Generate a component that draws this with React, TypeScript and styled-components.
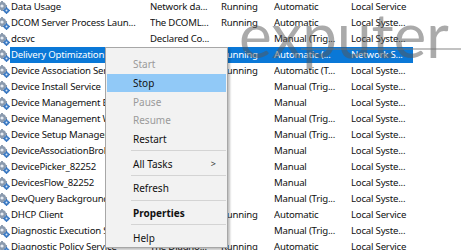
import styled, { createGlobalStyle } from "styled-components";

type Service = {
  name: string;
  desc?: string;
  status?: string;
  startup: string;
  logon: string;
  selected?: boolean;
};

const services: Service[] = [
  { name: "Data Usage", desc: "Network da...", status: "Running", startup: "Automatic", logon: "Local Service" },
  { name: "DCOM Server Process Laun...", desc: "The DCOML...", status: "Running", startup: "Automatic", logon: "Local Syste..." },
  { name: "dcsvc", desc: "Declared Co...", startup: "Manual (Trig...", logon: "Local Syste..." },
  { name: "Delivery Optimization", desc: "Performs...", status: "Running", startup: "Automatic (...", logon: "Network S...", selected: true },
  { name: "Device Association Service", desc: "Enables pa...", status: "Running", startup: "Automatic (T...", logon: "Local Syste..." },
  { name: "Device Install Service", desc: "Enables a c...", startup: "Manual (Trig...", logon: "Local Syste..." },
  { name: "Device Management Enrollment", desc: "Performs D...", startup: "Manual", logon: "Local Syste..." },
  { name: "Device Management Wireless", desc: "Routes Wir...", startup: "Manual (Trig...", logon: "Local Syste..." },
  { name: "Device Setup Manager", desc: "Enables the...", startup: "Manual (Trig...", logon: "Local Syste..." },
  { name: "DeviceAssociationBroker_82252", desc: "Enables app...", startup: "Manual", logon: "Local Syste..." },
  { name: "DevicePicker_82252", desc: "This user se...", startup: "Manual", logon: "Local Syste..." },
  { name: "DevicesFlow_82252", desc: "Allows Con...", startup: "Manual", logon: "Local Syste..." },
  { name: "DevQuery Background Discovery", desc: "Enables app...", startup: "Manual (Trig...", logon: "Local Syste..." },
  { name: "DHCP Client", desc: "Registers an...", status: "Running", startup: "Automatic", logon: "Local Service" },
  { name: "Diagnostic Execution Service", desc: "Executes di...", startup: "Manual (Trig...", logon: "Local Syste..." },
  { name: "Diagnostic Policy Service", desc: "The Diagno...", status: "Running", startup: "Automatic", logon: "Local Service" },
];

type MenuEntry =
  | { kind: "item"; label: string; disabled?: boolean; active?: boolean; bold?: boolean; sub?: boolean }
  | { kind: "sep" };

const menu: MenuEntry[] = [
  { kind: "item", label: "Start", disabled: true },
  { kind: "item", label: "Stop", active: true },
  { kind: "item", label: "Pause", disabled: true },
  { kind: "item", label: "Resume", disabled: true },
  { kind: "item", label: "Restart" },
  { kind: "sep" },
  { kind: "item", label: "All Tasks", sub: true },
  { kind: "sep" },
  { kind: "item", label: "Refresh" },
  { kind: "sep" },
  { kind: "item", label: "Properties", bold: true },
  { kind: "sep" },
  { kind: "item", label: "Help" },
];

function GearIcon() {
  return (
    <svg width="10" height="13" viewBox="0 0 10 13">
      {/* big gear, cropped at the left edge */}
      <g fill="#8a9aae">
        <circle cx="2" cy="5" r="4" />
        <rect x="1" y="0" width="2" height="10" />
        <rect x="-3" y="4" width="10" height="2" />
      </g>
      <circle cx="2" cy="5" r="1.6" fill="#e6ecf3" />
      {/* small blue gear */}
      <g fill="#3a78c2">
        <circle cx="6.5" cy="9.5" r="2.6" />
        <rect x="5.8" y="6" width="1.4" height="7" />
        <rect x="3" y="8.8" width="7" height="1.4" />
      </g>
      <circle cx="6.5" cy="9.5" r="1" fill="#dbe7f5" />
    </svg>
  );
}

export default function App() {
  return (
    <>
      <GlobalStyle />
      <Page>
        <List>
          {services.map((s, i) => (
            <Row key={i}>
              <IconCell>
                <GearIcon />
              </IconCell>
              <Cells $selected={s.selected}>
                <Cell>{s.name}</Cell>
                <Cell>{s.desc}</Cell>
                <Cell>{s.status}</Cell>
                <Cell>{s.startup}</Cell>
                <Cell>{s.logon}</Cell>
              </Cells>
            </Row>
          ))}
        </List>

        {/* site watermark */}
        <Watermark>
          exputer
          <WatermarkLine />
        </Watermark>

        {/* right-click menu */}
        <ContextMenu>
          {menu.map((m, i) =>
            m.kind === "sep" ? (
              <Separator key={i} />
            ) : (
              <MenuItem key={i} $disabled={m.disabled} $active={m.active} $bold={m.bold}>
                <span>{m.label}</span>
                {m.sub && <Chevron>&gt;</Chevron>}
              </MenuItem>
            )
          )}
        </ContextMenu>
      </Page>
    </>
  );
}

const GlobalStyle = createGlobalStyle`
  html, body {
    margin: 0;
    padding: 0;
    background: #ffffff;
    overflow: hidden;
  }
  body {
    font-family: "Noto Sans", "Open Sans", sans-serif;
  }
`;

const Page = styled.div`
  position: relative;
  width: 474px;
  height: 250px;
  overflow: hidden;
  background: #ffffff;
`;

const List = styled.div`
  display: flex;
  flex-direction: column;
  margin-top: -1px;
`;

const Row = styled.div`
  display: flex;
  height: 16px;
  align-items: center;
`;

const IconCell = styled.div`
  width: 10px;
  height: 16px;
  display: flex;
  align-items: center;
  flex-shrink: 0;
`;

const Cells = styled.div<{ $selected?: boolean }>`
  display: grid;
  grid-template-columns: 139px 71px 53px 77px 62px;
  width: 403px;
  height: 16px;
  padding-left: 1px;
  box-sizing: border-box;
  align-items: center;
  background: ${(p) => (p.$selected ? "#0a78d7" : "transparent")};
  color: ${(p) => (p.$selected ? "#ffffff" : "#111111")};
`;

const Cell = styled.div`
  font-size: 9.6px;
  letter-spacing: -0.2px;
  line-height: 16px;
  white-space: nowrap;
  overflow: hidden;
`;

const Watermark = styled.div`
  position: absolute;
  left: 239px;
  top: 3px;
  font-family: "Lato", "DejaVu Sans", sans-serif;
  font-weight: 400;
  font-size: 62px;
  letter-spacing: 0;
  line-height: 1;
  color: rgba(85, 85, 85, 0.5);
  pointer-events: none;
`;

const WatermarkLine = styled.div`
  position: absolute;
  left: 62px;
  top: 45px;
  width: 160px;
  height: 2px;
  background: rgba(120, 120, 120, 0.45);
`;

const ContextMenu = styled.div`
  position: absolute;
  left: 105px;
  top: 47px;
  width: 123px;
  height: 201px;
  box-sizing: border-box;
  padding: 7px 1px 0 1px;
  background: #f2f2f2;
  border: 1px solid #a7a7a7;
  box-shadow: 2px 2px 2px rgba(0, 0, 0, 0.25);
  display: flex;
  flex-direction: column;
`;

const MenuItem = styled.div<{ $disabled?: boolean; $active?: boolean; $bold?: boolean }>`
  display: flex;
  align-items: center;
  justify-content: space-between;
  height: 19px;
  padding: 0 10px 0 26px;
  font-size: 10px;
  font-weight: ${(p) => (p.$bold ? 700 : 400)};
  color: ${(p) => (p.$disabled ? "#9a9a9a" : "#111111")};
  background: ${(p) => (p.$active ? "#91c9f7" : "transparent")};
`;

const Chevron = styled.span`
  font-size: 9px;
  color: #333333;
`;

const Separator = styled.div`
  height: 1px;
  margin: 2px 0 3px 24px;
  background: #d4d4d4;
`;
